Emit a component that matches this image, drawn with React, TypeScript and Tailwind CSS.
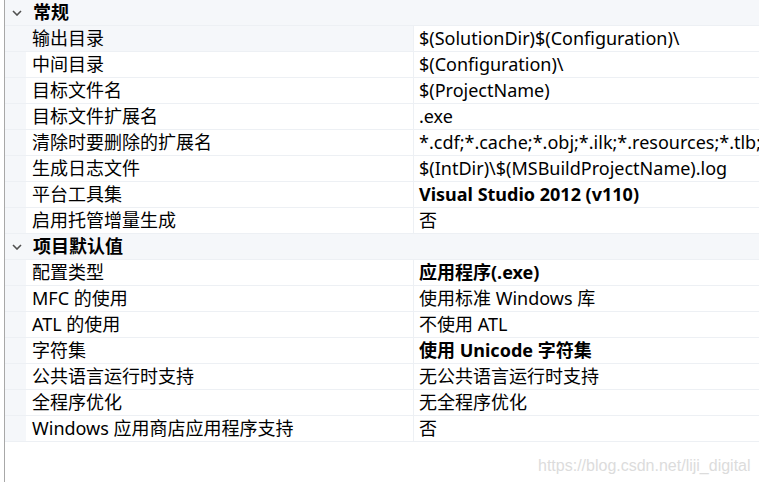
import React from "react";

type Row = { label: string; value: string; bold?: boolean; selected?: boolean };
type Group = { title: string; rows: Row[] };

const groups: Group[] = [
  {
    title: "常规",
    rows: [
      { label: "输出目录", value: "$(SolutionDir)$(Configuration)\\", selected: true },
      { label: "中间目录", value: "$(Configuration)\\" },
      { label: "目标文件名", value: "$(ProjectName)" },
      { label: "目标文件扩展名", value: ".exe" },
      {
        label: "清除时要删除的扩展名",
        value:
          "*.cdf;*.cache;*.obj;*.ilk;*.resources;*.tlb;*.tli;*.tlh;*.tmp;*.rsp;*.pgc;*.pgd;*.meta;*.tlog;*.manifest;*.res;*.pch;*.exp;*.idb;*.rep;*.xdc;*.pdb",
      },
      { label: "生成日志文件", value: "$(IntDir)\\$(MSBuildProjectName).log" },
      { label: "平台工具集", value: "Visual Studio 2012 (v110)", bold: true },
      { label: "启用托管增量生成", value: "否" },
    ],
  },
  {
    title: "项目默认值",
    rows: [
      { label: "配置类型", value: "应用程序(.exe)", bold: true },
      { label: "MFC 的使用", value: "使用标准 Windows 库" },
      { label: "ATL 的使用", value: "不使用 ATL" },
      { label: "字符集", value: "使用 Unicode 字符集", bold: true },
      { label: "公共语言运行时支持", value: "无公共语言运行时支持" },
      { label: "全程序优化", value: "无全程序优化" },
      { label: "Windows 应用商店应用程序支持", value: "否" },
    ],
  },
];

function Chevron() {
  return (
    <svg width="10" height="6" viewBox="0 0 10 6" className="text-[#505050]">
      <path d="M1 1 L5 5 L9 1" fill="none" stroke="currentColor" strokeWidth="1.6" />
    </svg>
  );
}

export default function App() {
  return (
    <div
      className="relative w-[759px] h-[482px] overflow-hidden bg-white text-[18px] text-black"
      style={{ fontFamily: '"Noto Sans", "Noto Sans CJK SC", sans-serif' }}
    >
      <div className="ml-[4px] h-full border-l border-[#a8a8a8]">
        {groups.map((g) => (
          <div key={g.title}>
            <div className="flex h-[26px] items-center bg-[#f5f7fa] border-b border-[#edf0f4] pb-[2px]">
              <div className="flex w-[21px] justify-center pl-[2px] pt-[2px]">
                <Chevron />
              </div>
              <span className="pl-[7px] font-bold leading-none">{g.title}</span>
            </div>
            {g.rows.map((r) => (
              <div key={r.label} className="flex h-[26px] border-b border-[#edf0f4]">
                <div className="w-[21px] shrink-0 bg-[#f5f7fa]" />
                <div
                  className={`flex w-[387px] shrink-0 items-center pb-[2px] pl-[6px] leading-none whitespace-nowrap ${
                    r.selected ? "bg-[#f5f7fa]" : ""
                  }`}
                >
                  {r.label}
                </div>
                <div
                  className={`flex min-w-0 flex-1 items-center overflow-hidden border-l border-[#edf0f4] pb-[2px] pl-[5px] leading-none whitespace-nowrap ${
                    r.bold ? "font-bold" : ""
                  }`}
                >
                  {r.value}
                </div>
              </div>
            ))}
          </div>
        ))}
      </div>
      <div
        className="absolute left-[538px] top-[454px] text-[16px] text-[#dcdcdc]"
        style={{ fontFamily: '"Liberation Sans", Arial, sans-serif' }}
      >
        https://blog.csdn.net/liji_digital
      </div>
    </div>
  );
}
